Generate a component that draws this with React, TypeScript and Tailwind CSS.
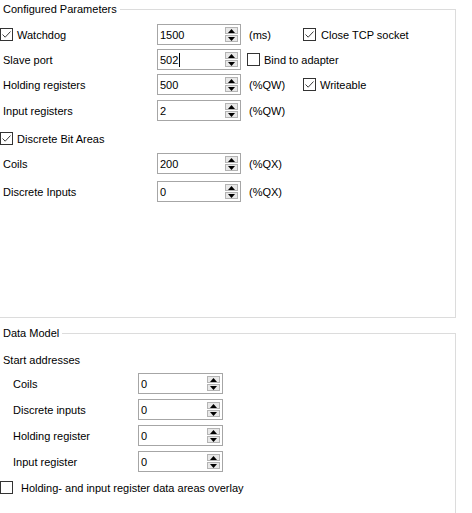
import React from "react";

function Check({ checked }: { checked?: boolean }) {
  return (
    <div className="w-[13px] h-[13px] border border-[#333333] bg-white flex items-center justify-center shrink-0">
      {checked && (
        <svg width="11" height="11" viewBox="0 0 11 11">
          <path d="M1.5 5.5 L4.2 8.2 L9.5 2.5" fill="none" stroke="#3c3c3c" strokeWidth="1" />
        </svg>
      )}
    </div>
  );
}

function Spin({ value, caret, w = "w-[84px]" }: { value: string; caret?: boolean; w?: string }) {
  return (
    <div className={`${w} h-[21px] border border-[#a6a6a6] bg-white flex items-stretch shrink-0`}>
      <div className="flex-1 flex items-center pl-[2px] text-black">
        {value}
        {caret && <span className="inline-block w-px h-[14px] bg-black ml-[1px]" />}
      </div>
      <div className="w-[13px] my-[2px] mr-[2px] flex flex-col gap-px">
        <div className="flex-1 bg-[#e8e8e8] border border-[#b4b4b4] flex items-center justify-center">
          <svg width="7" height="4" viewBox="0 0 7 4">
            <path d="M3.5 0 L7 4 L0 4 Z" fill="#000" />
          </svg>
        </div>
        <div className="flex-1 bg-[#e8e8e8] border border-[#b4b4b4] flex items-center justify-center">
          <svg width="7" height="4" viewBox="0 0 7 4">
            <path d="M0 0 L7 0 L3.5 4 Z" fill="#000" />
          </svg>
        </div>
      </div>
    </div>
  );
}

export default function App() {
  return (
    <div
      className="w-[472px] h-[513px] bg-white text-black text-[11px] leading-[14px] overflow-hidden flex flex-col"
      style={{ fontFamily: '"Liberation Sans", Arial, sans-serif' }}
    >
      {/* Configured Parameters */}
      <div className="relative mt-[9px] w-[456px] h-[309px] border-t border-r border-b border-[#dcdcdc] pt-[14px] flex flex-col shrink-0">
        <div className="absolute left-0 top-[-8px] bg-white pl-[3px] pr-[3px]">Configured Parameters</div>

        <div className="flex items-center h-[21px]">
          <div className="w-[157px] flex items-center gap-[4px]">
            <Check checked />
            <span>Watchdog</span>
          </div>
          <Spin value="1500" />
          <span className="ml-[8px] w-[54px]">(ms)</span>
          <Check checked />
          <span className="ml-[5px]">Close TCP socket</span>
        </div>

        <div className="flex items-center h-[21px] mt-[4px]">
          <div className="w-[157px] pl-[3px]">Slave port</div>
          <Spin value="502" caret />
          <div className="ml-[6px]">
            <Check />
          </div>
          <span className="ml-[4px]">Bind to adapter</span>
        </div>

        <div className="flex items-center h-[21px] mt-[4px]">
          <div className="w-[157px] pl-[3px]">Holding registers</div>
          <Spin value="500" />
          <span className="ml-[8px] w-[54px]">(%QW)</span>
          <Check checked />
          <span className="ml-[4px]">Writeable</span>
        </div>

        <div className="flex items-center h-[21px] mt-[5px]">
          <div className="w-[157px] pl-[3px]">Input registers</div>
          <Spin value="2" />
          <span className="ml-[8px]">(%QW)</span>
        </div>

        <div className="flex items-center h-[13px] mt-[11px] gap-[4px]">
          <Check checked />
          <span>Discrete Bit Areas</span>
        </div>

        <div className="flex items-center h-[21px] mt-[8px]">
          <div className="w-[157px] pl-[3px]">Coils</div>
          <Spin value="200" />
          <span className="ml-[8px]">(%QX)</span>
        </div>

        <div className="flex items-center h-[21px] mt-[7px]">
          <div className="w-[157px] pl-[3px]">Discrete Inputs</div>
          <Spin value="0" />
          <span className="ml-[8px]">(%QX)</span>
        </div>
      </div>

      {/* Data Model */}
      <div className="relative mt-[15px] w-[456px] flex-1 border-t border-r border-[#dcdcdc] pt-[19px] flex flex-col">
        <div className="absolute left-0 top-[-8px] bg-white pl-[3px] pr-[3px]">Data Model</div>

        <div className="pl-[3px]">Start addresses</div>

        {[
          ["Coils", "mt-[6px]"],
          ["Discrete inputs", "mt-[5px]"],
          ["Holding register", "mt-[5px]"],
          ["Input register", "mt-[5px]"],
        ].map(([label, mt]) => (
          <div key={label} className={`flex items-center h-[21px] ${mt}`}>
            <div className="w-[138px] pl-[13px]">{label}</div>
            <Spin value="0" w="w-[85px]" />
          </div>
        ))}

        <div className="flex items-center h-[13px] mt-[9px]">
          <Check />
          <span className="ml-[8px]">Holding- and input register data areas overlay</span>
        </div>
      </div>
    </div>
  );
}
